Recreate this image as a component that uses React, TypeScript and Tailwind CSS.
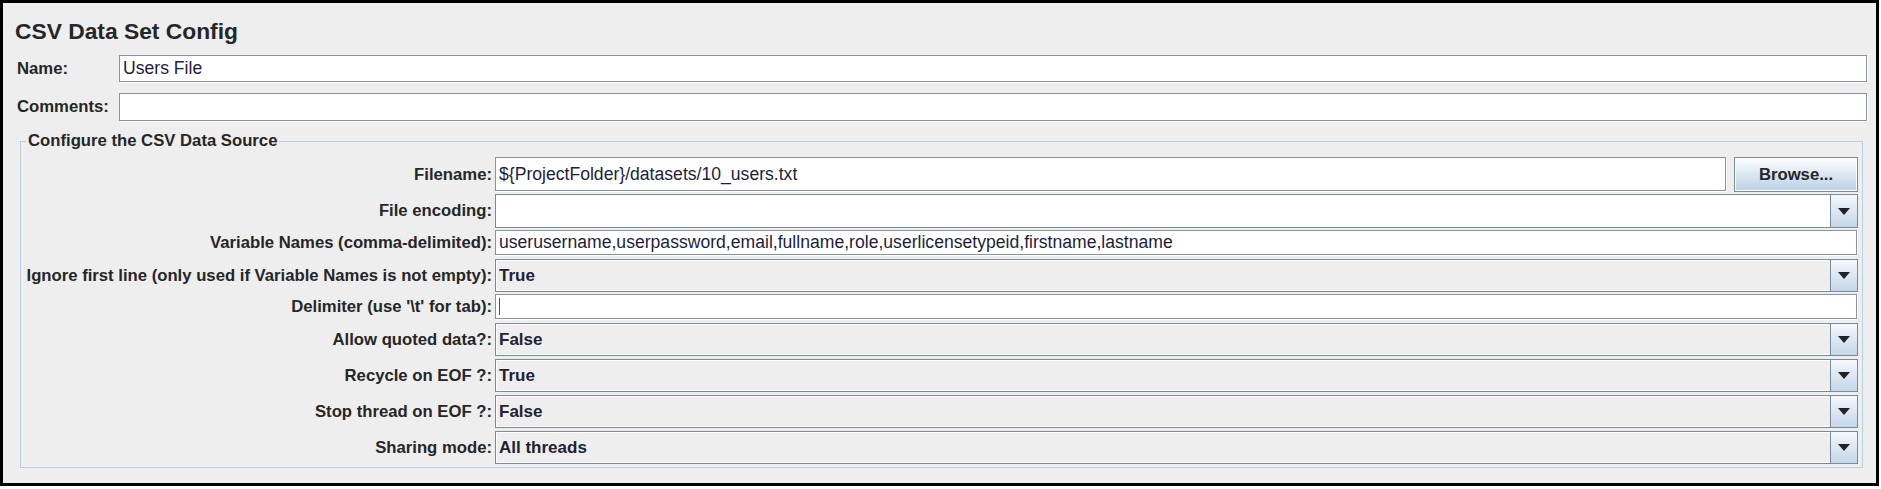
const font = "font-['Liberation_Sans',Arial,sans-serif]";

type ComboProps = {
  value?: string;
  editable?: boolean;
  className?: string;
};

function Arrow() {
  return (
    <div className="flex w-[27px] shrink-0 items-center justify-center border-l border-[#7a8a99] bg-gradient-to-b from-[#f4f8fc] to-[#c4d6e9]">
      <svg viewBox="0 0 12 7" className="h-[7px] w-[12px]">
        <path d="M0 0h12L6 7z" fill="#222" />
      </svg>
    </div>
  );
}

function Combo({ value, editable, className }: ComboProps) {
  return (
    <div
      className={[
        "flex flex-1 border border-[#7a8a99] shadow-[inset_0_0_0_1px_#ffffff]",
        editable ? "bg-white" : "bg-[#eeeeee]",
        className ?? "",
      ].join(" ")}
    >
      <div className="flex flex-1 items-center pl-[3px] text-[17px] font-bold text-[#222233]">{value}</div>
      <Arrow />
    </div>
  );
}

function TextField({ value, caret, className }: { value?: string; caret?: boolean; className?: string }) {
  return (
    <div
      className={[
        "flex flex-1 items-center border border-[#8795a3] bg-white pl-[3px] text-[17.6px] text-[#1e1e3c] shadow-[1px_1px_0_#ffffff]",
        className ?? "",
      ].join(" ")}
    >
      {caret ? <span className="h-[17px] w-[1px] bg-[#5b3f8c]" /> : null}
      {value}
    </div>
  );
}

function Row({ label, children, className }: { label: string; children: React.ReactNode; className: string }) {
  return (
    <div className={["flex", className].join(" ")}>
      <div className="flex w-[474px] shrink-0 items-center justify-end pr-[3px] text-[16.7px] font-bold text-[#262626]">
        {label}
      </div>
      {children}
    </div>
  );
}

export default function App() {
  return (
    <div className={`${font} h-[486px] w-[1879px] border-[3px] border-black bg-[#eeeeee]`}>
      <div className="flex flex-col pl-[14px] pr-[9px]">
        <h1 className="ml-[-2px] mt-[15px] h-[26px] text-[22.8px] font-bold leading-[26px] text-[#262626]">
          CSV Data Set Config
        </h1>
        <div className="mt-[11px] flex h-[27px]">
          <div className="flex w-[102px] shrink-0 items-center text-[16.7px] font-bold text-[#262626]">Name:</div>
          <TextField value="Users File" />
        </div>
        <div className="mt-[11px] flex h-[28px]">
          <div className="flex w-[102px] shrink-0 items-center text-[16.7px] font-bold text-[#262626]">Comments:</div>
          <TextField />
        </div>
        <fieldset className="ml-[3px] mr-[4px] mt-[10px] border border-[#b8cfe5] pb-[3px] pr-[4px] pt-[6px]">
          <legend className="ml-[5px] px-[2px] text-[16.7px] font-bold leading-[20px] text-[#262626]">
            Configure the CSV Data Source
          </legend>
          <Row label="Filename:" className="h-[35px]">
            <div className="flex flex-1 gap-[8px]">
              <TextField value="${ProjectFolder}/datasets/10_users.txt" className="mb-[1px]" />
              <button
                type="button"
                className="w-[124px] shrink-0 border border-[#7a8a99] bg-gradient-to-b from-white to-[#b8cfe5] text-[16.7px] font-bold text-[#262626] shadow-[inset_0_0_0_1px_#ffffff]"
              >
                Browse...
              </button>
            </div>
          </Row>
          <Row label="File encoding:" className="mt-[2px] h-[34px]">
            <Combo editable />
          </Row>
          <Row label="Variable Names (comma-delimited):" className="mt-[2px] h-[25px]">
            <TextField
              value="userusername,userpassword,email,fullname,role,userlicensetypeid,firstname,lastname"
              className="mr-[1px]"
            />
          </Row>
          <Row label="Ignore first line (only used if Variable Names is not empty):" className="mt-[4px] h-[33px]">
            <Combo value="True" />
          </Row>
          <Row label="Delimiter (use '\t' for tab):" className="mt-[2px] h-[25px]">
            <TextField caret className="mr-[1px]" />
          </Row>
          <Row label="Allow quoted data?:" className="mt-[4px] h-[33px]">
            <Combo value="False" />
          </Row>
          <Row label="Recycle on EOF ?:" className="mt-[3px] h-[33px]">
            <Combo value="True" />
          </Row>
          <Row label="Stop thread on EOF ?:" className="mt-[3px] h-[33px]">
            <Combo value="False" />
          </Row>
          <Row label="Sharing mode:" className="mt-[3px] h-[33px]">
            <Combo value="All threads" />
          </Row>
        </fieldset>
      </div>
    </div>
  );
}
